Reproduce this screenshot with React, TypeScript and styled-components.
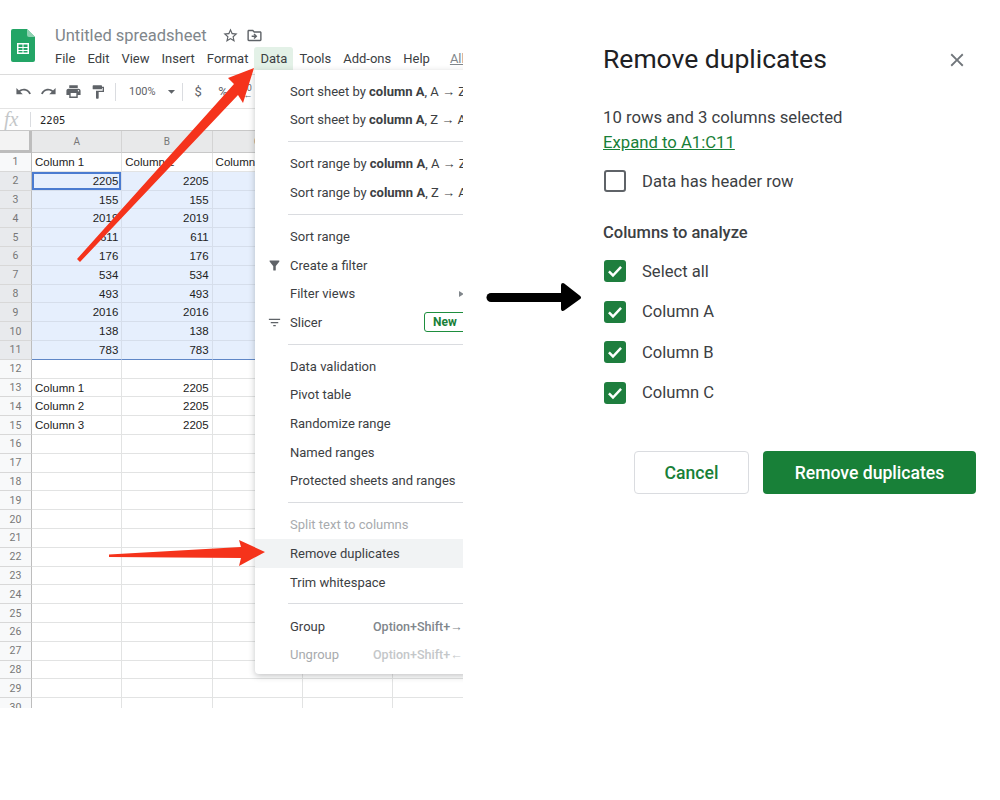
import React from "react";
import styled, { createGlobalStyle } from "styled-components";
import {
  MdUndo,
  MdRedo,
  MdPrint,
  MdFormatPaint,
  MdStarBorder,
  MdClose,
  MdFilterList,
  MdFilterAlt,
  MdOutlineDriveFileMove,
  MdArrowDropDown,
} from "react-icons/md";

const GlobalStyle = createGlobalStyle`
  html, body {
    margin: 0;
    padding: 0;
    background: #fff;
  }
`;

const menuBar = ["File", "Edit", "View", "Insert", "Format", "Data", "Tools", "Add-ons", "Help"];

type CellRow = { a?: string; b?: string; c?: string; text?: boolean };

const rows: CellRow[] = [
  { a: "Column 1", b: "Column 2", c: "Column 3", text: true },
  { a: "2205", b: "2205" },
  { a: "155", b: "155" },
  { a: "2019", b: "2019" },
  { a: "611", b: "611" },
  { a: "176", b: "176" },
  { a: "534", b: "534" },
  { a: "493", b: "493" },
  { a: "2016", b: "2016" },
  { a: "138", b: "138" },
  { a: "783", b: "783" },
  {},
  { a: "Column 1", b: "2205" },
  { a: "Column 2", b: "2205" },
  { a: "Column 3", b: "2205" },
  ...Array.from({ length: 15 }, () => ({})),
];

export default function App() {
  return (
    <Page>
      <GlobalStyle />
      <Sheet>
        <TitleBar>
          <LogoSlot>
            <svg width="24" height="33" viewBox="0 0 24 33">
              <path d="M2 0h14l8 8v23a2 2 0 0 1-2 2H2a2 2 0 0 1-2-2V2a2 2 0 0 1 2-2z" fill="#23a566" />
              <path d="M16 0l8 8h-6a2 2 0 0 1-2-2z" fill="#8ed1b1" />
              <path d="M6 14h12v11H6z M7.5 15.5v2.5h4v-2.5z M12.5 15.5v2.5h4v-2.5z M7.5 19v2h4v-2z M12.5 19v2h4v-2z M7.5 22v1.5h4V22z M12.5 22v1.5h4V22z" fill="#fff" fillRule="evenodd" />
            </svg>
          </LogoSlot>
          <TitleColumn>
            <TitleRow>
              <DocTitle>Untitled spreadsheet</DocTitle>
              <MdStarBorder size={17} color="#5f6368" />
              <MdOutlineDriveFileMove size={17} color="#5f6368" />
            </TitleRow>
            <MenuBar>
              {menuBar.map((m) => (
                <MenuBarItem key={m} $active={m === "Data"}>{m}</MenuBarItem>
              ))}
              <SavedLink>All changes saved</SavedLink>
            </MenuBar>
          </TitleColumn>
        </TitleBar>

        <Toolbar>
          <MdUndo size={17} />
          <MdRedo size={17} />
          <MdPrint size={17} />
          <MdFormatPaint size={16} />
          <ToolSep />
          <ZoomValue>100%</ZoomValue>
          <ZoomCaret size={17} />
          <ToolSep />
          <ToolGlyph $first>$</ToolGlyph>
          <ToolGlyph>%</ToolGlyph>
          <DecimalGlyph>
            <span>.0</span>
            <span>←</span>
          </DecimalGlyph>
        </Toolbar>

        <FormulaBar>
          <FxLabel>fx</FxLabel>
          <FormulaValue>2205</FormulaValue>
        </FormulaBar>

        <GridRow $height={22}>
          <Corner />
          <ColumnHead $selected>A</ColumnHead>
          <ColumnHead $selected>B</ColumnHead>
          <ColumnHead $selected>C</ColumnHead>
          <ColumnHead>D</ColumnHead>
          <ColumnHead>E</ColumnHead>
        </GridRow>

        {rows.map((row, i) => {
          const n = i + 1;
          const selected = n >= 2 && n <= 11;
          return (
            <GridRow key={n} $height={18.8}>
              <RowHead $selected={selected}>{n}</RowHead>
              <Cell $selected={selected} $last={n === 11} $active={n === 2} $text={row.text || (!!row.a && row.a.startsWith("Col"))}>{row.a}</Cell>
              <Cell $selected={selected} $last={n === 11} $text={row.text}>{row.b}</Cell>
              <Cell $selected={selected} $last={n === 11} $text={row.text}>{row.c}</Cell>
              <Cell />
              <Cell />
            </GridRow>
          );
        })}

        <DataMenu>
          <MenuItem>Sort sheet by&nbsp;<b>column A</b>, A → Z</MenuItem>
          <MenuItem>Sort sheet by&nbsp;<b>column A</b>, Z → A</MenuItem>
          <MenuSep />
          <MenuItem>Sort range by&nbsp;<b>column A</b>, A → Z</MenuItem>
          <MenuItem>Sort range by&nbsp;<b>column A</b>, Z → A</MenuItem>
          <MenuSep />
          <MenuItem>Sort range</MenuItem>
          <MenuItem>
            <MenuIcon><MdFilterAlt size={15} /></MenuIcon>
            Create a filter
          </MenuItem>
          <MenuItem>
            Filter views
            <SubmenuCaret />
          </MenuItem>
          <MenuItem>
            <MenuIcon><MdFilterList size={15} /></MenuIcon>
            Slicer
            <NewBadge>New</NewBadge>
          </MenuItem>
          <MenuSep />
          <MenuItem>Data validation</MenuItem>
          <MenuItem>Pivot table</MenuItem>
          <MenuItem>Randomize range</MenuItem>
          <MenuItem>Named ranges</MenuItem>
          <MenuItem>Protected sheets and ranges</MenuItem>
          <MenuSep />
          <MenuItem $disabled>Split text to columns</MenuItem>
          <MenuItem $hover>Remove duplicates</MenuItem>
          <MenuItem>Trim whitespace</MenuItem>
          <MenuSep />
          <MenuItem>
            Group
            <Shortcut>Option+Shift+→</Shortcut>
          </MenuItem>
          <MenuItem $disabled>
            Ungroup
            <Shortcut $faint>Option+Shift+←</Shortcut>
          </MenuItem>
        </DataMenu>
      </Sheet>

      <Dialog>
        <DialogHeader>
          <DialogTitle>Remove duplicates</DialogTitle>
          <MdClose size={22} color="#70757a" />
        </DialogHeader>
        <Summary>10 rows and 3 columns selected</Summary>
        <ExpandLink>Expand to A1:C11</ExpandLink>
        <HeaderOption>
          <CheckBox />
          <CheckLabel>Data has header row</CheckLabel>
        </HeaderOption>
        <SectionTitle>Columns to analyze</SectionTitle>
        <CheckList>
          {["Select all", "Column A", "Column B", "Column C"].map((label) => (
            <CheckRow key={label}>
              <CheckBox $checked>
                <svg width="18" height="18" viewBox="0 0 16 16">
                  <path d="M2.6 8.400l3.600 3.600 7.200-7.600" fill="none" stroke="#fff" strokeWidth="2.200" />
                </svg>
              </CheckBox>
              <CheckLabel>{label}</CheckLabel>
            </CheckRow>
          ))}
        </CheckList>
        <DialogActions>
          <CancelButton>Cancel</CancelButton>
          <ConfirmButton>Remove duplicates</ConfirmButton>
        </DialogActions>
      </Dialog>

      <Annotations width="1000" height="800" viewBox="0 0 1000 800">
        <polygon points="77,259 234,84 228,78 254,68 243,103 238,95 80,262" fill="#f5331b" />
        <polygon points="109,554.500 241,547 239,540 265,552 239,566 241,558 109,557" fill="#f5331b" />
        <path d="M491 297.500H562" stroke="#000" strokeWidth="9" strokeLinecap="round" />
        <polygon points="563,285 579,297.500 563,309" fill="#000" stroke="#000" strokeWidth="4" strokeLinejoin="round" />
      </Annotations>
    </Page>
  );
}

const Page = styled.div`
  position: relative;
  display: flex;
  align-items: flex-start;
  width: 1000px;
  height: 800px;
  overflow: hidden;
  background: #fff;
  font-family: Roboto, "Liberation Sans", sans-serif;
`;

const Sheet = styled.div`
  position: relative;
  flex: none;
  width: 463px;
  height: 708px;
  overflow: hidden;
`;

const TitleBar = styled.div`
  display: flex;
  height: 74px;
  border-bottom: 1px solid #dcdcdc;
  box-sizing: content-box;
`;

const LogoSlot = styled.div`
  flex: none;
  width: 55px;
  padding: 29px 0 0 11px;
  box-sizing: border-box;
`;

const TitleColumn = styled.div`
  display: flex;
  flex-direction: column;
  padding-top: 25px;
  min-width: 0;
  flex: 1;
`;

const TitleRow = styled.div`
  display: flex;
  align-items: center;
  gap: 7px;
  height: 21px;
  svg:first-of-type {
    margin-left: 8px;
  }
`;

const DocTitle = styled.span`
  font-size: 16.500px;
  color: #80868b;
  white-space: nowrap;
`;

const MenuBar = styled.div`
  display: flex;
  margin: 1px 0 0 -6px;
  height: 23px;
  white-space: nowrap;
  overflow: hidden;
`;

const MenuBarItem = styled.span<{ $active?: boolean }>`
  display: flex;
  align-items: center;
  padding: 0 6px;
  font-size: 13px;
  color: #3c4043;
  border-radius: 3px 3px 0 0;
  background: ${(p) => (p.$active ? "#e3f1e7" : "transparent")};
`;

const SavedLink = styled.span`
  display: flex;
  align-items: center;
  margin-left: 14px;
  font-size: 13px;
  color: #80868b;
  text-decoration: underline;
`;

const Toolbar = styled.div`
  display: flex;
  align-items: center;
  height: 33px;
  padding-left: 15px;
  gap: 8px;
  color: #5f6368;
  border-bottom: 1px solid #e4e4e4;
`;

const ToolSep = styled.span`
  width: 1px;
  height: 18px;
  background: #dadce0;
  margin: 0 5px 0 1px;
`;

const ZoomValue = styled.span`
  font-size: 11px;
  color: #5f6368;
`;

const ZoomCaret = styled(MdArrowDropDown)`
  margin: 0 -7px 0 -1px;
`;

const ToolGlyph = styled.span<{ $first?: boolean }>`
  width: 17px;
  margin-left: ${(p) => (p.$first ? "-6px" : "0")};
  font-size: 13px;
  text-align: center;
  white-space: nowrap;
  color: #5f6368;
`;

const DecimalGlyph = styled.span`
  display: flex;
  flex-direction: column;
  align-items: center;
  width: 17px;
  font-size: 9px;
  line-height: 7px;
  color: #5f6368;
`;

const FormulaBar = styled.div`
  display: flex;
  align-items: center;
  height: 21px;
  border-bottom: 1px solid #c8c8c8;
`;

const FxLabel = styled.span`
  width: 31px;
  padding-left: 4px;
  box-sizing: border-box;
  height: 15px;
  line-height: 14px;
  border-right: 1px solid #dadce0;
  font-family: "Liberation Serif", serif;
  font-style: italic;
  font-size: 20px;
  color: #c4c7c9;
`;

const FormulaValue = styled.span`
  margin-left: 9px;
  font-family: "DejaVu Sans Mono", monospace;
  font-size: 10.500px;
  color: #222;
`;

const GridRow = styled.div<{ $height: number }>`
  display: grid;
  grid-template-columns: 32px repeat(5, 90.300px);
  height: ${(p) => p.$height}px;
`;

const Corner = styled.div`
  background: #f3f3f3;
  border-right: 3px solid #bdbdbd;
  border-bottom: 3px solid #bdbdbd;
  box-sizing: border-box;
`;

const ColumnHead = styled.div<{ $selected?: boolean }>`
  display: flex;
  align-items: center;
  justify-content: center;
  font-size: 10px;
  color: #777;
  background: ${(p) => (p.$selected ? "#e8e9ea" : "#f6f6f6")};
  border-right: 1px solid #d4d4d4;
  border-bottom: 1px solid #c8c8c8;
  box-sizing: border-box;
`;

const RowHead = styled.div<{ $selected?: boolean }>`
  display: flex;
  align-items: center;
  justify-content: center;
  font-size: 10.500px;
  color: #777;
  background: ${(p) => (p.$selected ? "#e8eaed" : "#f8f9fa")};
  border-right: 1px solid #bdbdbd;
  border-bottom: 1px solid #d8d8d8;
  box-sizing: border-box;
`;

const Cell = styled.div<{ $selected?: boolean; $last?: boolean; $active?: boolean; $text?: boolean }>`
  padding: 0 3px;
  font-family: "Liberation Sans", Arial, sans-serif;
  font-size: 11.500px;
  line-height: 18px;
  color: #222;
  white-space: nowrap;
  overflow: hidden;
  text-align: ${(p) => (p.$text ? "left" : "right")};
  background: ${(p) => (p.$selected ? "#e6effd" : "#fff")};
  border-right: 1px solid ${(p) => (p.$selected ? "#d6deeb" : "#e2e3e3")};
  border-bottom: 1px solid ${(p) => (p.$last ? "#5f87c7" : p.$selected ? "#d6deeb" : "#e2e3e3")};
  box-shadow: ${(p) => (p.$active ? "inset 0 0 0 2px #4a7bd0" : "none")};
  box-sizing: border-box;
`;

const DataMenu = styled.div`
  position: absolute;
  left: 255px;
  top: 70px;
  width: 215px;
  padding: 7px 0 5px;
  background: #fff;
  border-radius: 0 0 4px 4px;
  box-shadow: 0 2px 6px rgba(60, 64, 67, 0.3);
`;

const MenuItem = styled.div<{ $disabled?: boolean; $hover?: boolean }>`
  position: relative;
  display: flex;
  align-items: center;
  height: 28.650px;
  padding-left: 35px;
  font-size: 13px;
  white-space: nowrap;
  color: ${(p) => (p.$disabled ? "#a8abae" : "#3c4043")};
  background: ${(p) => (p.$hover ? "#f1f3f4" : "transparent")};
  b {
    font-weight: 700;
    color: #3c4043;
  }
`;

const MenuIcon = styled.span`
  position: absolute;
  left: 12px;
  top: 7px;
  color: #5f6368;
`;

const SubmenuCaret = styled.span`
  margin-left: auto;
  margin-right: 6px;
  border-left: 5px solid #80868b;
  border-top: 3px solid transparent;
  border-bottom: 3px solid transparent;
`;

const NewBadge = styled.span`
  margin-left: auto;
  margin-right: 2px;
  width: 44px;
  height: 20px;
  padding-left: 8px;
  box-sizing: border-box;
  border: 1px solid #1e8e3e;
  border-radius: 3px;
  font-size: 12px;
  font-weight: 700;
  line-height: 18px;
  color: #188038;
`;

const Shortcut = styled.span<{ $faint?: boolean }>`
  flex: none;
  width: 97px;
  margin-left: auto;
  font-size: 12.500px;
  font-weight: 500;
  overflow: hidden;
  color: ${(p) => (p.$faint ? "#c4c7c9" : "#80868b")};
`;

const MenuSep = styled.div`
  height: 1px;
  margin: 7px 0 7.300px 33px;
  background: #dadce0;
`;

const Dialog = styled.div`
  flex: none;
  display: flex;
  flex-direction: column;
  width: 373px;
  margin-left: 140px;
  padding-top: 44px;
  color: #3c4043;
`;

const DialogHeader = styled.div`
  display: flex;
  align-items: center;
  justify-content: space-between;
  height: 32px;
  padding-right: 8px;
`;

const DialogTitle = styled.h1`
  margin: 0 0 2px;
  font-size: 26.500px;
  line-height: 30px;
  font-weight: 400;
  color: #202124;
`;

const Summary = styled.div`
  margin-top: 30px;
  font-size: 16.700px;
  line-height: 24px;
`;

const ExpandLink = styled.a`
  margin-top: 1px;
  font-size: 16.700px;
  line-height: 24px;
  color: #188038;
  text-decoration: underline;
`;

const HeaderOption = styled.div`
  display: flex;
  align-items: center;
  margin-top: 15px;
  height: 22px;
`;

const SectionTitle = styled.div`
  margin-top: 29px;
  font-size: 16.500px;
  font-weight: 500;
  line-height: 24px;
`;

const CheckList = styled.div`
  display: flex;
  flex-direction: column;
  gap: 18.600px;
  margin-top: 15px;
`;

const CheckRow = styled.div`
  display: flex;
  align-items: center;
  height: 22px;
`;

const CheckBox = styled.span<{ $checked?: boolean }>`
  flex: none;
  display: flex;
  align-items: center;
  justify-content: center;
  width: 22px;
  height: 22px;
  margin-left: 1px;
  box-sizing: border-box;
  border-radius: 3px;
  border: ${(p) => (p.$checked ? "none" : "2px solid #5f6368")};
  background: ${(p) => (p.$checked ? "#1e7e3e" : "#fff")};
`;

const CheckLabel = styled.span`
  margin-left: 16px;
  font-size: 16.600px;
  color: #3c4043;
`;

const DialogActions = styled.div`
  display: flex;
  justify-content: flex-end;
  gap: 14px;
  margin-top: 47px;
`;

const CancelButton = styled.button`
  width: 115px;
  height: 43px;
  padding: 2px 0 0;
  background: #fff;
  border: 1px solid #dadce0;
  border-radius: 4px;
  font-family: inherit;
  font-size: 17.600px;
  font-weight: 500;
  color: #188038;
`;

const ConfirmButton = styled.button`
  width: 213px;
  height: 43px;
  padding: 2px 0 0;
  background: #188038;
  border: none;
  border-radius: 4px;
  font-family: inherit;
  font-size: 17.600px;
  font-weight: 500;
  color: #fff;
`;

const Annotations = styled.svg`
  position: absolute;
  left: 0;
  top: 0;
  pointer-events: none;
`;
